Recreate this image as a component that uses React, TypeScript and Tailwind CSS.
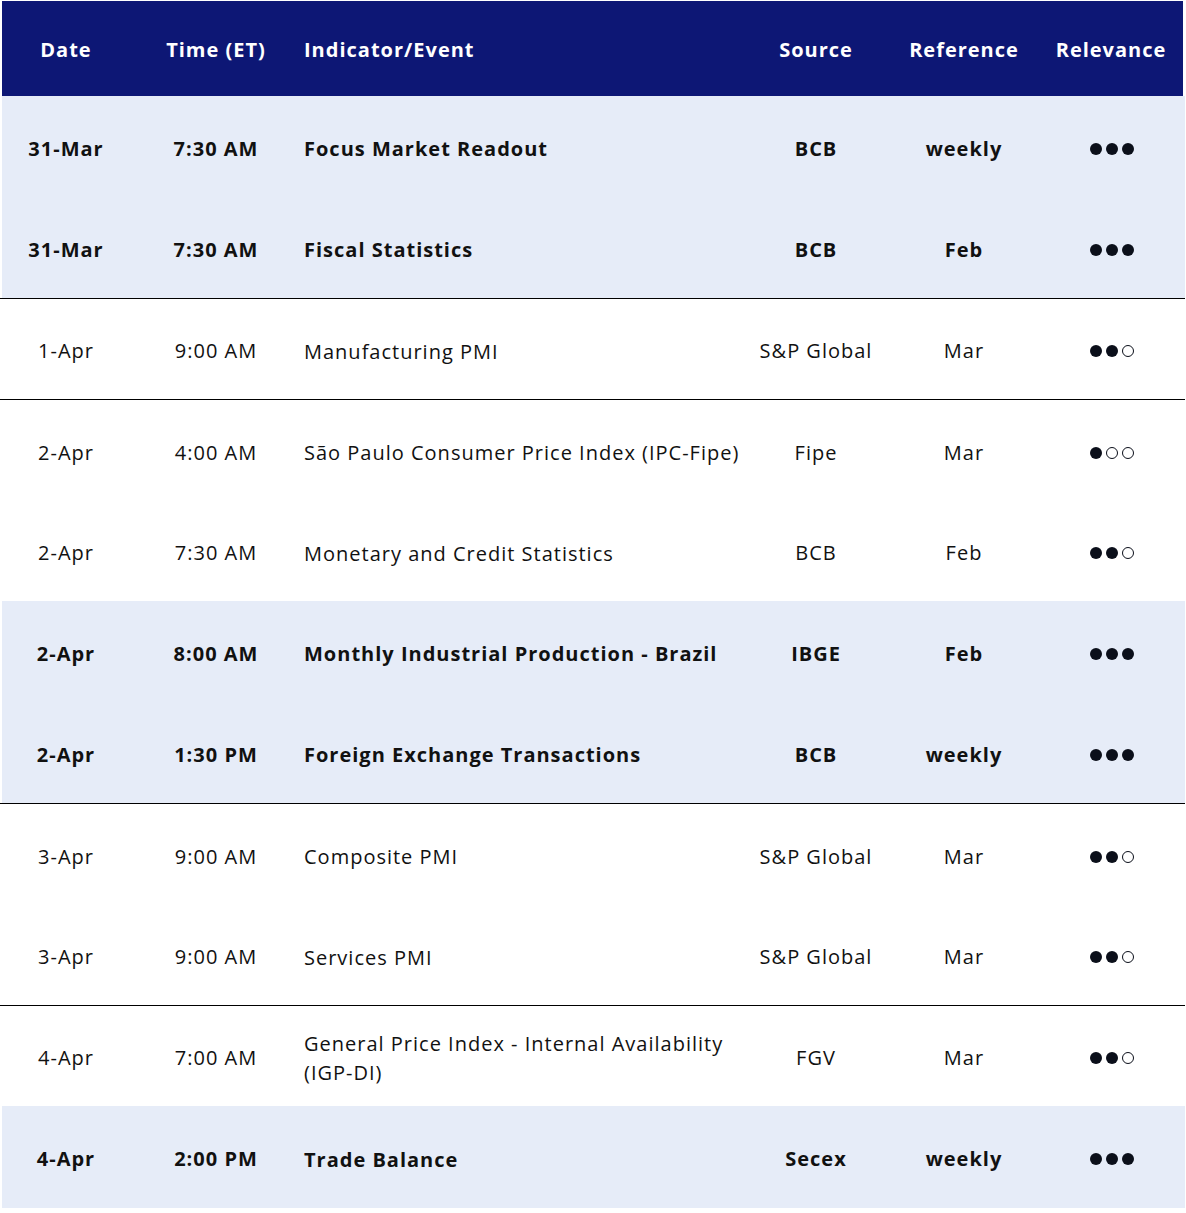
import React from "react";

type Row = {
  date: string;
  time: string;
  event: React.ReactNode;
  source: string;
  ref: string;
  level: number;
  hl?: boolean;
  h: string;
  line?: boolean;
};

const rows: Row[] = [
  { date: "31-Mar", time: "7:30 AM", event: "Focus Market Readout", source: "BCB", ref: "weekly", level: 3, hl: true, h: "h-[101px]" },
  { date: "31-Mar", time: "7:30 AM", event: "Fiscal Statistics", source: "BCB", ref: "Feb", level: 3, hl: true, h: "h-[101px]", line: true },
  { date: "1-Apr", time: "9:00 AM", event: "Manufacturing PMI", source: "S&P Global", ref: "Mar", level: 2, h: "h-[100px]", line: true },
  { date: "2-Apr", time: "4:00 AM", event: "São Paulo Consumer Price Index (IPC-Fipe)", source: "Fipe", ref: "Mar", level: 1, h: "h-[101px]" },
  { date: "2-Apr", time: "7:30 AM", event: "Monetary and Credit Statistics", source: "BCB", ref: "Feb", level: 2, h: "h-[100px]" },
  { date: "2-Apr", time: "8:00 AM", event: "Monthly Industrial Production - Brazil", source: "IBGE", ref: "Feb", level: 3, hl: true, h: "h-[101px]" },
  { date: "2-Apr", time: "1:30 PM", event: "Foreign Exchange Transactions", source: "BCB", ref: "weekly", level: 3, hl: true, h: "h-[101px]", line: true },
  { date: "3-Apr", time: "9:00 AM", event: "Composite PMI", source: "S&P Global", ref: "Mar", level: 2, h: "h-[101px]" },
  { date: "3-Apr", time: "9:00 AM", event: "Services PMI", source: "S&P Global", ref: "Mar", level: 2, h: "h-[100px]", line: true },
  {
    date: "4-Apr",
    time: "7:00 AM",
    event: (
      <>
        General Price Index - Internal Availability
        <br />
        (IGP-DI)
      </>
    ),
    source: "FGV",
    ref: "Mar",
    level: 2,
    h: "h-[100px]",
  },
  { date: "4-Apr", time: "2:00 PM", event: "Trade Balance", source: "Secex", ref: "weekly", level: 3, hl: true, h: "h-[102px]" },
];

const cols = "grid grid-cols-[128px_172px_438px_152px_144px_1fr] items-center";

function Dots({ level }: { level: number }) {
  return (
    <div className="flex items-center justify-center gap-[4px] pl-[2px]">
      {[0, 1, 2].map((i) =>
        i < level ? (
          <span key={i} className="w-[12px] h-[12px] rounded-full bg-[#0b0f1a]" />
        ) : (
          <span key={i} className="w-[12px] h-[12px] rounded-full border-[1.5px] border-[#0b0f1a]" />
        )
      )}
    </div>
  );
}

export default function App() {
  return (
    <div
      className="w-[1186px] h-[1213px] bg-white pt-[1px] text-[20px] tracking-[0.05em] text-[#111]"
      style={{ fontFamily: '"Open Sans", "Noto Sans", sans-serif' }}
    >
      {/* header */}
      <div className={`${cols} ml-[2px] w-[1181px] h-[95px] pt-[2px] bg-[#0d1775] text-white font-bold`}>
        <div className="text-center">Date</div>
        <div className="text-center">Time (ET)</div>
        <div className="pl-[2px]">Indicator/Event</div>
        <div className="text-center">Source</div>
        <div className="text-center">Reference</div>
        <div className="text-center pl-[3px]">Relevance</div>
      </div>

      {rows.map((r, i) => (
        <React.Fragment key={i}>
          <div
            className={`${cols} ${r.h} ml-[2px] w-[1183px] pt-[4px] ${
              r.hl ? "bg-[#e6ecf8] font-bold" : "bg-white"
            }`}
          >
            <div className="text-center">{r.date}</div>
            <div className="text-center">{r.time}</div>
            <div className="pl-[2px] whitespace-nowrap leading-[29px]">{r.event}</div>
            <div className="text-center">{r.source}</div>
            <div className="text-center">{r.ref}</div>
            <Dots level={r.level} />
          </div>
          {r.line && <div className="w-[1185px] h-px bg-black" />}
        </React.Fragment>
      ))}
    </div>
  );
}
